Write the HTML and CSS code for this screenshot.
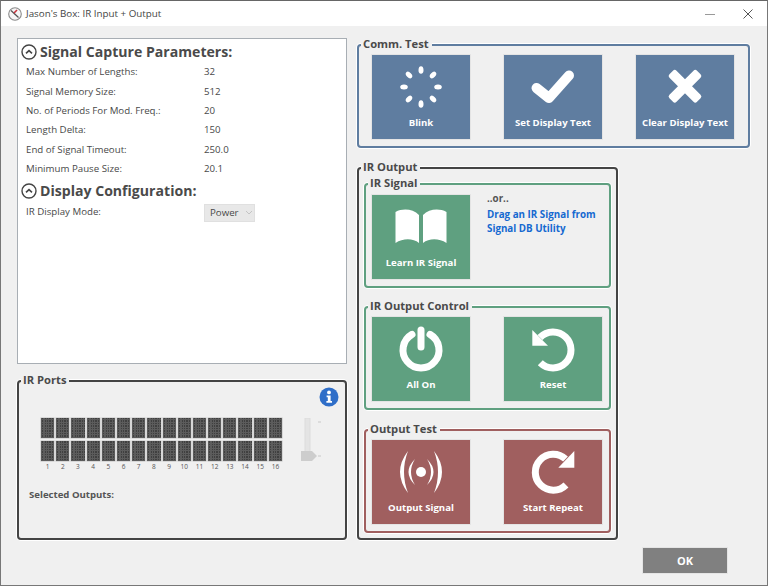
FILE: index.html
```html
<!DOCTYPE html>
<html lang="en">
<head>
<meta charset="utf-8">
<title>Jason's Box: IR Input + Output</title>
<link rel="stylesheet" href="styles.css">
</head>
<body>
<div class="window">
  <header class="titlebar">
    <svg class="app-icon" viewBox="0 0 14 14"><circle cx="7" cy="7" r="6.3" fill="#f6f6f6" stroke="#8a8a8a" stroke-width="1.1"/><path d="M3 3.5L10.5 10.5" stroke="#555" stroke-width="1.3"/><path d="M6 6L9 3" stroke="#c8323c" stroke-width="1.6"/></svg>
    <span class="title">Jason's Box: IR Input + Output</span>
    <span class="win-controls">
      <svg class="win-btn" viewBox="0 0 10 10"><path d="M0 5.5H10" stroke="#999" stroke-width="1"/></svg>
      <svg class="win-btn" viewBox="0 0 10 10"><path d="M.5.5L9.5 9.5M9.5.5L.5 9.5" stroke="#555" stroke-width="1"/></svg>
    </span>
  </header>
  <main class="content">
    <div class="left">
      <section class="params">
        <h2 class="section-head"><svg class="collapse" viewBox="0 0 16 16"><circle cx="8" cy="8" r="7" fill="none" stroke="#444" stroke-width="1.4"/><path d="M5 9.4L8 6.6L11 9.4" fill="none" stroke="#444" stroke-width="1.6"/></svg>Signal Capture Parameters:</h2>
        <div class="row"><span class="key">Max Number of Lengths:</span><span>32</span></div>
        <div class="row"><span class="key">Signal Memory Size:</span><span>512</span></div>
        <div class="row"><span class="key">No. of Periods For Mod. Freq.:</span><span>20</span></div>
        <div class="row"><span class="key">Length Delta:</span><span>150</span></div>
        <div class="row"><span class="key">End of Signal Timeout:</span><span>250.0</span></div>
        <div class="row"><span class="key">Minimum Pause Size:</span><span>20.1</span></div>
        <h2 class="section-head second"><svg class="collapse" viewBox="0 0 16 16"><circle cx="8" cy="8" r="7" fill="none" stroke="#444" stroke-width="1.4"/><path d="M5 9.4L8 6.6L11 9.4" fill="none" stroke="#444" stroke-width="1.6"/></svg>Display Configuration:</h2>
        <div class="row"><span class="key">IR Display Mode:</span><span class="select">Power<svg class="select-arrow" viewBox="0 0 8 5"><path d="M1 1L4 4L7 1" fill="none" stroke="#c4c4c4" stroke-width="1"/></svg></span></div>
      </section>
      <section class="group ports">
        <div class="legend">IR Ports</div>
        <div class="ports-top">
          <svg class="info" viewBox="0 0 20 20"><circle cx="10" cy="10" r="9.5" fill="#2f6ec8"/><circle cx="10" cy="5.4" r="1.9" fill="#fff"/><path d="M7.6 8.4H11.6V14H13V15.8H7.4V14H8.8V10.2H7.6Z" fill="#fff"/></svg>
        </div>
        <div class="ports-mid">
          <div class="matrix">
            <div class="cell"></div><div class="cell"></div><div class="cell"></div><div class="cell"></div><div class="cell"></div><div class="cell"></div><div class="cell"></div><div class="cell"></div><div class="cell"></div><div class="cell"></div><div class="cell"></div><div class="cell"></div><div class="cell"></div><div class="cell"></div><div class="cell"></div><div class="cell"></div>
            <div class="cell"></div><div class="cell"></div><div class="cell"></div><div class="cell"></div><div class="cell"></div><div class="cell"></div><div class="cell"></div><div class="cell"></div><div class="cell"></div><div class="cell"></div><div class="cell"></div><div class="cell"></div><div class="cell"></div><div class="cell"></div><div class="cell"></div><div class="cell"></div>
            <span class="num">1</span><span class="num">2</span><span class="num">3</span><span class="num">4</span><span class="num">5</span><span class="num">6</span><span class="num">7</span><span class="num">8</span><span class="num">9</span><span class="num">10</span><span class="num">11</span><span class="num">12</span><span class="num">13</span><span class="num">14</span><span class="num">15</span><span class="num">16</span>
          </div>
          <svg class="slider" viewBox="0 0 22 46"><rect x="5" y="0" width="5" height="40" fill="#e4e4e4" stroke="#dcdcdc"/><path d="M1 33H12L17 38L12 43H1Z" fill="#cdcdcd"/><path d="M18 4H21M18 38H21" stroke="#c8c8c8"/></svg>
        </div>
        <div class="selected">Selected Outputs:</div>
      </section>
    </div>
    <div class="right">
      <section class="group comm">
        <div class="legend">Comm. Test</div>
        <div class="btn-row wide">
          <button class="tile blue"><svg class="glyph" viewBox="0 0 56 48"><g fill="#fff"><ellipse cx="28" cy="7" rx="2.5" ry="3.8"/><ellipse cx="28" cy="41" rx="2.5" ry="3.8"/><ellipse cx="11" cy="24" rx="3.8" ry="2.5"/><ellipse cx="45" cy="24" rx="3.8" ry="2.5"/><ellipse cx="16" cy="12" rx="3.8" ry="2.5" transform="rotate(45 16 12)"/><ellipse cx="40" cy="12" rx="3.8" ry="2.5" transform="rotate(-45 40 12)"/><ellipse cx="16" cy="36" rx="3.8" ry="2.5" transform="rotate(-45 16 36)"/><ellipse cx="40" cy="36" rx="3.8" ry="2.5" transform="rotate(45 40 36)"/></g></svg><span>Blink</span></button>
          <button class="tile blue"><svg class="glyph" viewBox="0 0 56 48"><path d="M11.5 25L24 35L44 12.5" fill="none" stroke="#fff" stroke-width="10" stroke-linecap="round" stroke-linejoin="round"/></svg><span>Set Display Text</span></button>
          <button class="tile blue"><svg class="glyph" viewBox="0 0 56 48"><g fill="#fff"><rect x="8.5" y="18.3" width="39" height="10" rx="2.5" transform="rotate(45 28 23.3)"/><rect x="8.5" y="18.3" width="39" height="10" rx="2.5" transform="rotate(-45 28 23.3)"/></g></svg><span>Clear Display Text</span></button>
        </div>
      </section>
      <section class="group output">
        <div class="legend">IR Output</div>
        <div class="group signal">
          <div class="legend">IR Signal</div>
          <div class="btn-row">
            <button class="tile green"><svg class="glyph" viewBox="0 0 56 48"><path d="M26 12C20 6 10 5 2.5 9V40C10 35 20 35 26 40Z M30 12C36 6 46 5 53.5 9V40C46 35 36 35 30 40Z" fill="#fff"/></svg><span>Learn IR Signal</span></button>
            <div class="drag-note"><div class="or">..or..</div><div class="drag">Drag an IR Signal from<br>Signal DB Utility</div></div>
          </div>
        </div>
        <div class="group control">
          <div class="legend">IR Output Control</div>
          <div class="btn-row">
            <button class="tile green"><svg class="glyph" viewBox="0 0 56 48"><path d="M19 9.4A18 18 0 1 0 37 9.4" fill="none" stroke="#fff" stroke-width="7" stroke-linecap="round"/><path d="M28 5V22" stroke="#fff" stroke-width="7" stroke-linecap="round"/></svg><span>All On</span></button>
            <button class="tile green"><svg class="glyph" viewBox="0 0 56 48"><path d="M15.3 37.7A18 18 0 1 0 15 12.5" fill="none" stroke="#fff" stroke-width="7"/><path d="M7.3 5V20.7H23Z" fill="#fff"/></svg><span>Reset</span></button>
          </div>
        </div>
        <div class="group test">
          <div class="legend">Output Test</div>
          <div class="btn-row">
            <button class="tile red"><svg class="glyph" viewBox="0 0 56 48"><circle cx="28" cy="24" r="5" fill="#fff"/><path d="M15 3Q-1 24 15 45Q7 24 15 3ZM41 3Q57 24 41 45Q49 24 41 3ZM22 11Q9 24 22 37Q14 24 22 11ZM34 11Q47 24 34 37Q42 24 34 11Z" fill="#fff"/></svg><span>Output Signal</span></button>
            <button class="tile red"><svg class="glyph" viewBox="0 0 56 48"><path d="M41 37A18 18 0 1 1 40.5 11" fill="none" stroke="#fff" stroke-width="7"/><path d="M33.3 19.7H49.3V3Z" fill="#fff"/></svg><span>Start Repeat</span></button>
          </div>
        </div>
      </section>
    </div>
  </main>
  <footer class="footer"><button class="ok">OK</button></footer>
</div>
</body>
</html>
```
FILE: styles.css
```css
* { box-sizing: border-box; }
html, body { margin: 0; padding: 0; }
body { width: 768px; height: 586px; overflow: hidden; font-family: "Open Sans", "Noto Sans", sans-serif; font-size: 10px; color: #444; }
.window { width: 768px; height: 586px; background: #f0f0f0; border: 1px solid #777; border-top-color: #666; display: flex; flex-direction: column; }
.titlebar { height: 25px; background: #fff; display: flex; align-items: center; padding-left: 7px; flex: none; }
.app-icon { width: 14px; height: 14px; margin-right: 4px; }
.title { font-size: 9.8px; color: #444; }
.win-controls { margin-left: auto; display: flex; gap: 28px; margin-right: 14px; }
.win-btn { width: 10px; height: 10px; display: block; }
.content { display: flex; gap: 10px; padding: 12px 0 0 16px; flex: none; height: 513px; }
.left { width: 330px; display: flex; flex-direction: column; gap: 16px; }
.right { width: 393px; display: flex; flex-direction: column; }
.params { height: 326px; background: #fff; border: 1px solid #a8aeb4; padding: 3px 0 0 3px; flex: none; }
.section-head { margin: 0; display: flex; align-items: center; gap: 3px; font-size: 14.1px; font-weight: 700; line-height: 20px; height: 20px; color: #4a4a4a; }
.section-head.second { margin-top: 3px; }
.collapse { width: 16px; height: 16px; flex: none; }
.row { display: flex; align-items: center; height: 19.4px; padding-left: 5px; font-size: 9.7px; color: #484848; }
.key { width: 178px; flex: none; }
.select { width: 51px; height: 18px; margin-top: 3px; padding-left: 5px; background: #e8e8e8; border: 1px solid #e0e0e0; display: flex; align-items: center; gap: 6px; }
.select-arrow { width: 8px; height: 5px; }
.group { --pad: 0px; border: 2px solid #444; border-radius: 4px; box-shadow: 0 0 0 1px #fff; padding: 0 var(--pad); flex: none; }
.legend { width: fit-content; height: 14px; margin: -8px 0 0 calc(2px - var(--pad)); padding: 0 3px 0 2px; background: #f0f0f0; font-size: 11.2px; font-weight: 700; line-height: 11px; color: #4a4a4a; }
.ports { --pad: 7px; height: 160px; }
.ports-top { display: flex; justify-content: flex-end; height: 14px; margin-right: -1px; }
.info { width: 20px; height: 20px; margin-top: -1.3px; }
.ports-mid { display: flex; margin-top: 15.6px; padding-left: 15px; gap: 18px; }
.matrix { display: grid; grid-template-columns: repeat(16, 13.2px); grid-template-rows: 20.5px 20.5px 12px; column-gap: 2px; row-gap: 2.5px; }
.cell { background-color: #404040; background-image: repeating-linear-gradient(90deg, #5c5c5c 0 1px, transparent 1px 2.5px), repeating-linear-gradient(0deg, #5c5c5c 0 1px, transparent 1px 2.5px); box-shadow: 0 0 0 .5px #bdbdbd; }
.num { margin-top: -2.5px; font-size: 6.5px; line-height: 12px; text-align: center; color: #555; }
.slider { width: 22px; height: 46px; }
.selected { margin-top: 12px; padding-left: 3px; font-size: 9.6px; font-weight: 700; color: #555; }
.comm { --pad: 13px; height: 104px; border-color: #5f7da0; margin-top: 6px; }
.btn-row { display: flex; gap: 34px; margin-top: 3px; }
.tile { width: 98px; height: 84px; flex: none; padding: 8px 0 0; border: 0; display: flex; flex-direction: column; align-items: center; color: #fff; font-family: inherit; font-size: 9.6px; font-weight: 700; box-shadow: 0 0 0 1px #e4e4e4; }
.tile span { margin-top: 4.6px; line-height: 14px; white-space: nowrap; }
.glyph { width: 56px; height: 48px; flex: none; }
.blue { background: #5f7da0; }
.green { background: #5fa080; }
.red { background: #a05f5f; }
.output { --pad: 5px; width: 261px; height: 373px; margin-top: 19px; }
.output .group { --pad: 6px; }
.signal, .control { border-color: #5fa080; }
.test { border-color: #a05f5f; }
.signal { height: 105px; margin-top: 8px; }
.control { height: 104px; margin-top: 18px; }
.test { height: 104px; margin-top: 19px; }
.signal .btn-row { margin-top: 4px; gap: 17px; }
.drag-note { margin-top: -3px; font-size: 9.8px; font-weight: 700; line-height: 14px; }
.or { color: #555; }
.drag { margin-top: 2px; color: #1569d0; }
.footer { display: flex; justify-content: flex-end; padding: 9px 40px 0 0; }
.ok { width: 84px; height: 25px; border: 0; background: #808080; color: #fff; font-family: inherit; font-size: 11px; font-weight: 700; box-shadow: 0 0 0 1px #e4e4e4; }
```
